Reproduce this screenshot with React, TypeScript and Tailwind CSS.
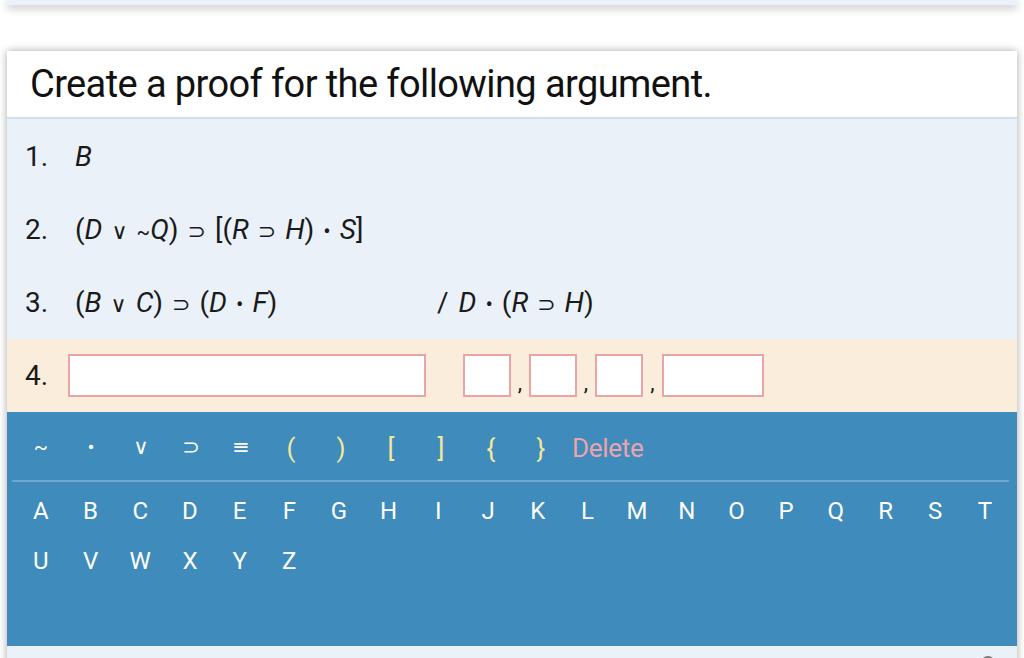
import React from "react";

const ops = ["~", "•", "∨", "⊃", "≡"];
const brackets = ["(", ")", "[", "]", "{", "}"];
const letters = "ABCDEFGHIJKLMNOPQRSTUVWXYZ".split("");

function V({ c }: { c: string }) {
  return <span className="italic">{c}</span>;
}

function Op({ c }: { c: string }) {
  return <span className="mx-[9px] text-[22px] not-italic">{c}</span>;
}

function Premise({ n, children, extra }: { n: string; children: React.ReactNode; extra?: React.ReactNode }) {
  return (
    <div className="flex h-[73px] items-center pl-[18px] text-[28px] text-[#1a1a1a]">
      <span className="w-[50px]">{n}</span>
      <div className="w-[362px]">{children}</div>
      {extra}
    </div>
  );
}

function SmallBox({ w = "w-[48px]" }: { w?: string }) {
  return <div className={`h-[43px] ${w} border-2 border-[#eba4a4] bg-white`} />;
}

export default function App() {
  return (
    <div className="h-[658px] overflow-hidden bg-white" style={{ fontFamily: "Roboto, 'DejaVu Sans', sans-serif" }}>
      <div className="mx-[7px] h-[5px] bg-[#eaf1f8] shadow-[0_3px_8px_rgba(0,0,0,0.3)]" />

      <div className="mx-[7px] mt-[46px] shadow-[0_0_8px_rgba(0,0,0,0.35)]">
        <div className="flex h-[68px] items-center border-b-2 border-[#cfe0ee] bg-white pl-[23px] text-[38px] tracking-[-0.6px] text-[#111]">
          Create a proof for the following argument.
        </div>

        <div className="bg-[#eaf1f8] pt-[1px]">
          <Premise n="1.">
            <V c="B" />
          </Premise>
          <Premise n="2.">
            (<V c="D" />
            <Op c="∨" />
            <span className="text-[20px]">~</span>
            <V c="Q" />)<Op c="⊃" />[(<V c="R" />
            <Op c="⊃" />
            <V c="H" />)<Op c="•" />
            <V c="S" />]
          </Premise>
          <Premise
            n="3."
            extra={
              <div>
                <span className="mr-[10px]">/</span>
                <V c="D" />
                <Op c="•" />(<V c="R" />
                <Op c="⊃" />
                <V c="H" />)
              </div>
            }
          >
            (<V c="B" />
            <Op c="∨" />
            <V c="C" />)<Op c="⊃" />(<V c="D" />
            <Op c="•" />
            <V c="F" />)
          </Premise>
        </div>

        <div className="flex h-[73px] items-center bg-[#fbeddb] pl-[18px] text-[28px] text-[#1a1a1a]">
          <span className="w-[43px]">4.</span>
          <div className="h-[43px] w-[358px] border-2 border-[#eba4a4] bg-white" />
          <div className="ml-[37px] flex items-center">
            <SmallBox />
            <span className="w-[18px] pt-[14px] text-center text-[22px]">,</span>
            <SmallBox />
            <span className="w-[18px] pt-[14px] text-center text-[22px]">,</span>
            <SmallBox />
            <span className="w-[19px] pt-[14px] text-center text-[22px]">,</span>
            <SmallBox w="w-[102px]" />
          </div>
        </div>

        <div className="h-[234px] bg-[#3e8bbc] pl-[9px] pt-[20px]">
          <div className="flex h-[32px] items-center">
            {ops.map((o) => (
              <div key={o} className="w-[50px] text-center text-[21px] text-white">
                {o}
              </div>
            ))}
            {brackets.map((b) => (
              <div key={b} className="w-[50px] text-center text-[26px] text-[#f3e79a]">
                {b}
              </div>
            ))}
            <div className="ml-[6px] text-[26px] tracking-[-0.3px] text-[#eba5aa]">Delete</div>
          </div>
          <div className="mr-[8px] ml-[-4px] mt-[16px] h-[2px] bg-[#6ea7cf]" />
          <div className="mt-[4px] grid grid-cols-[repeat(20,49.7px)]">
            {letters.map((l) => (
              <div key={l} className="flex h-[50px] items-center justify-center text-[24px] text-white">
                {l}
              </div>
            ))}
          </div>
        </div>

        <div className="flex h-[30px] justify-end bg-[#eaf1f8] pr-[22px] pt-[10px]">
          <div className="h-[14px] w-[14px] rounded-full bg-[#777]" />
        </div>
      </div>
    </div>
  );
}
